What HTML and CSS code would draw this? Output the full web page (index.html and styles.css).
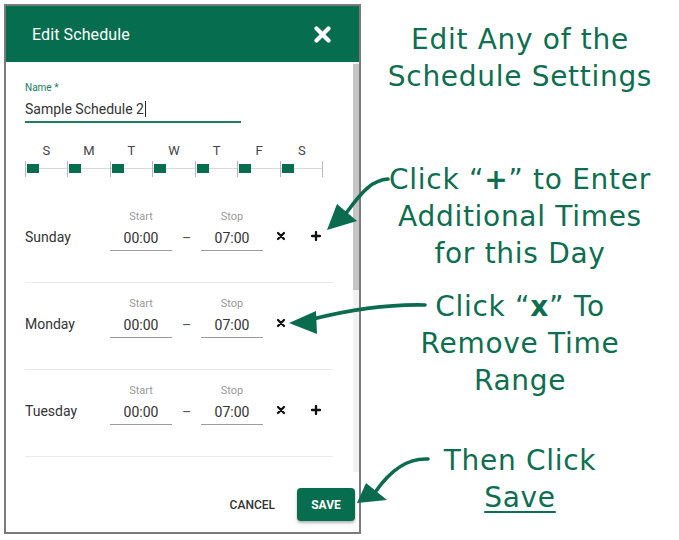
FILE: index.html
```html
<!DOCTYPE html>
<html>
<head>
<meta charset="utf-8">
<link rel="stylesheet" href="styles.css">
</head>
<body>
<div class="page">
  <div class="dialog">
    <div class="dlg-head">
      <span class="dlg-title">Edit Schedule</span>
      <svg class="close" width="17" height="17" viewBox="0 0 17 17"><path d="M2.5 2.5 L14.5 14.5 M14.5 2.5 L2.5 14.5" stroke="#fff" stroke-width="4.2" stroke-linecap="round"/></svg>
    </div>
    <div class="dlg-body">
      <div class="dlg-content">
        <div class="field">
          <div class="field-label">Name *</div>
          <div class="field-input">Sample Schedule 2<span class="caret"></span></div>
        </div>
        <div class="week">
          <div class="week-letters"><span>S</span><span>M</span><span>T</span><span>W</span><span>T</span><span>F</span><span>S</span></div>
          <div class="week-slider">
            <div class="seg"><b class="block"></b></div>
            <div class="seg"><b class="block"></b></div>
            <div class="seg"><b class="block"></b></div>
            <div class="seg"><b class="block"></b></div>
            <div class="seg"><b class="block"></b></div>
            <div class="seg"><b class="block"></b></div>
            <div class="seg last"><b class="block"></b></div>
          </div>
        </div>

        <div class="day-row">
          <div class="day-name">Sunday</div>
          <div class="tfield"><div class="tlabel">Start</div><div class="tinput">00:00</div></div>
          <div class="dash">–</div>
          <div class="tfield"><div class="tlabel">Stop</div><div class="tinput">07:00</div></div>
          <svg class="ico ico-x" width="10" height="10" viewBox="0 0 10 10"><path d="M2 2 L8 8 M8 2 L2 8" stroke="#111" stroke-width="2.3" stroke-linecap="round"/></svg>
          <svg class="ico ico-plus" width="10" height="10" viewBox="0 0 10 10"><path d="M5 1 V9 M1 5 H9" stroke="#111" stroke-width="2.3" stroke-linecap="round"/></svg>
        </div>
        <div class="day-row">
          <div class="day-name">Monday</div>
          <div class="tfield"><div class="tlabel">Start</div><div class="tinput">00:00</div></div>
          <div class="dash">–</div>
          <div class="tfield"><div class="tlabel">Stop</div><div class="tinput">07:00</div></div>
          <svg class="ico ico-x" width="10" height="10" viewBox="0 0 10 10"><path d="M2 2 L8 8 M8 2 L2 8" stroke="#111" stroke-width="2.3" stroke-linecap="round"/></svg>
        </div>
        <div class="day-row">
          <div class="day-name">Tuesday</div>
          <div class="tfield"><div class="tlabel">Start</div><div class="tinput">00:00</div></div>
          <div class="dash">–</div>
          <div class="tfield"><div class="tlabel">Stop</div><div class="tinput">07:00</div></div>
          <svg class="ico ico-x" width="10" height="10" viewBox="0 0 10 10"><path d="M2 2 L8 8 M8 2 L2 8" stroke="#111" stroke-width="2.3" stroke-linecap="round"/></svg>
          <svg class="ico ico-plus" width="10" height="10" viewBox="0 0 10 10"><path d="M5 1 V9 M1 5 H9" stroke="#111" stroke-width="2.3" stroke-linecap="round"/></svg>
        </div>
      </div>
      <div class="scrollbar"><div class="thumb"></div></div>
    </div>
    <div class="dlg-foot">
      <button class="btn-cancel">CANCEL</button>
      <button class="btn-save">SAVE</button>
    </div>
  </div>

  <div class="notes">
    <p class="note note-1">Edit Any of the<br>Schedule Settings</p>
    <p class="note note-2">Click “<b>+</b>” to Enter<br>Additional Times<br>for this Day</p>
    <p class="note note-3">Click “<b>x</b>” To<br>Remove Time<br>Range</p>
    <p class="note note-4">Then Click<br><u>Save</u></p>
  </div>
</div>

<svg class="arrows" width="679" height="540" viewBox="0 0 679 540">
  <g fill="none" stroke="#0b6b4f" stroke-width="3.6" stroke-linecap="round">
    <path d="M388 179 C373 180 363 190 347 212"/>
    <path d="M425 305 C385 304 345 311 313 319"/>
    <path d="M428 459 C406 458 390 471 376 491"/>
  </g>
  <g fill="#0b6b4f">
    <polygon points="327,230 337,204 357,221"/>
    <polygon points="289,323 316,311 317,334"/>
    <polygon points="357,503 366,483 387,500"/>
  </g>
</svg>
</body>
</html>
```

FILE: styles.css
```css
* { box-sizing: border-box; }

html, body {
  margin: 0;
  padding: 0;
  background: #fff;
}

body {
  width: 679px;
  height: 540px;
  overflow: hidden;
  position: relative;
  font-family: Roboto, "Liberation Sans", sans-serif;
}

.page {
  display: flex;
  align-items: flex-start;
}

/* ---------- dialog ---------- */
.dialog {
  margin: 4px 0 0 4px;
  width: 357px;
  height: 530px;
  border: 2px solid #7b7b7b;
  display: flex;
  flex-direction: column;
  background: #fff;
}

.dlg-head {
  height: 56px;
  flex: none;
  background: #066e4e;
  display: flex;
  align-items: center;
  justify-content: space-between;
  padding: 0 28px 0 26px;
}

.dlg-title {
  color: #fff;
  font-size: 16px;
  letter-spacing: 0.1px;
}

.close { display: block; }

.dlg-body {
  height: 410px;
  flex: none;
  display: flex;
  overflow: hidden;
}

.dlg-content {
  flex: 1;
  padding: 20px 0 0 19px;
  overflow: hidden;
}

.scrollbar {
  width: 6px;
  background: #f1f1f1;
  flex: none;
}

.thumb {
  margin-top: 2px;
  height: 226px;
  background: #c4c4c4;
}

/* name field */
.field-label {
  font-size: 10px;
  line-height: 12px;
  color: #16805c;
}

.field-input {
  margin-top: 6px;
  width: 216px;
  font-size: 14px;
  line-height: 18px;
  color: #333;
  padding-bottom: 3px;
  border-bottom: 2px solid #1d7f5e;
  display: flex;
  align-items: center;
}

.caret {
  display: inline-block;
  width: 1px;
  height: 16px;
  background: #222;
  margin-left: 1px;
}

/* week selector */
.week {
  margin-top: 20px;
  width: 298px;
}

.week-letters {
  display: flex;
  font-size: 13px;
  line-height: 16px;
  color: #444;
}

.week-letters span {
  flex: 1;
  text-align: center;
}

.week-slider {
  margin-top: 2px;
  height: 16px;
  display: flex;
}

.seg {
  flex: 1;
  border-left: 1px solid #b9b9b9;
  background: linear-gradient(#d9d9d9, #d9d9d9) 0 7px / 100% 1px no-repeat;
  padding-top: 3px;
  padding-left: 1px;
}

.seg.last { border-right: 1px solid #b9b9b9; }

.block {
  display: block;
  width: 12px;
  height: 9px;
  background: #066e4e;
}

/* day rows */
.day-row {
  margin-top: 0;
  width: 308px;
  height: 87px;
  border-bottom: 1px solid #ebebeb;
  padding-top: 14px;
  display: flex;
  align-items: flex-start;
}

.week + .day-row { margin-top: 19px; }

.day-name {
  width: 85px;
  margin-top: 18px;
  font-size: 14px;
  line-height: 18px;
  color: #333;
}

.tfield {
  width: 62px;
  text-align: center;
}

.tlabel {
  font-size: 11px;
  line-height: 14px;
  color: #9a9a9a;
}

.tinput {
  margin-top: 5px;
  font-size: 14px;
  line-height: 18px;
  color: #333;
  padding-bottom: 3px;
  border-bottom: 1px solid #9c9c9c;
}

.dash {
  width: 29px;
  text-align: center;
  margin-top: 19px;
  font-size: 14px;
  line-height: 18px;
  color: #555;
}

.ico {
  display: block;
  margin-top: 21px;
  flex: none;
}

.ico-x { margin-left: 13px; }
.ico-plus { margin-left: 25px; }

/* footer */
.dlg-foot {
  height: 60px;
  flex: none;
  display: flex;
  justify-content: flex-end;
  align-items: flex-start;
  padding: 16px 4px 0 0;
}

.dlg-foot button {
  font-family: Roboto, "Liberation Sans", sans-serif;
  font-size: 12px;
  border: none;
  cursor: pointer;
}

.btn-cancel {
  background: transparent;
  color: #333;
  font-weight: 500;
  height: 33px;
  padding: 0 8px;
  margin-right: 14px;
}

.btn-save {
  width: 58px;
  height: 33px;
  background: #066e4e;
  color: #fff;
  font-weight: 700;
  border-radius: 4px;
  box-shadow: 0 2px 3px rgba(0, 0, 0, 0.3);
}

/* annotations */
.notes {
  width: 318px;
  padding-top: 21px;
  text-align: center;
  color: #0d6e50;
  font-family: "DejaVu Sans", sans-serif;
  font-size: 28px;
  line-height: 37px;
  letter-spacing: 0.7px;
}

.note { margin: 0; }
.note b { font-weight: 700; }
.note u { text-decoration-thickness: 2px; text-underline-offset: 4px; }

.note-2 { margin-top: 66px; }
.note-3 { margin-top: 16px; }
.note-4 { margin-top: 43px; }

/* overlay arrows */
.arrows {
  position: absolute;
  left: 0;
  top: 0;
  pointer-events: none;
}
```
